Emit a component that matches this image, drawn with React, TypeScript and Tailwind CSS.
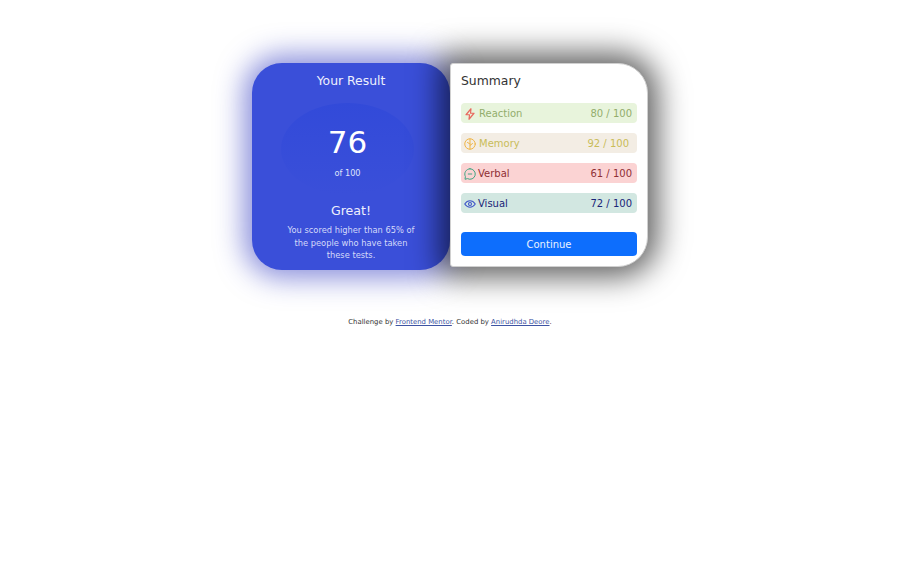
const rows = [
  { label: "Reaction", score: "80 / 100", bg: "bg-[#e8f4dc]", text: "text-[#93ad6c]", gap: "gap-[3px]", pr: "pr-[5px]", icon: "reaction" },
  { label: "Memory", score: "92 / 100", bg: "bg-[#f3ede4]", text: "text-[#c9bc59]", gap: "gap-[3px]", pr: "pr-[8px]", icon: "memory" },
  { label: "Verbal", score: "61 / 100", bg: "bg-[#fbd3d3]", text: "text-[#8f2f33]", gap: "gap-[2px]", pr: "pr-[5px]", icon: "verbal" },
  { label: "Visual", score: "72 / 100", bg: "bg-[#d2e7e1]", text: "text-[#1a2578]", gap: "gap-[2px]", pr: "pr-[5px]", icon: "visual" },
];

function RowIcon({ name }: { name: string }) {
  if (name === "reaction") {
    return (
      <svg className="translate-y-[1px]" width="12" height="12" viewBox="0 0 24 24" fill="none" stroke="#e8695f" strokeWidth="2.4" strokeLinejoin="round">
        <path d="M14 1.500 4 13.500h7l-1 9 10-12h-7z" />
      </svg>
    );
  }
  if (name === "memory") {
    return (
      <svg className="translate-y-[1px]" width="12" height="12" viewBox="0 0 24 24" fill="none" stroke="#efb547" strokeWidth="2" strokeLinecap="round">
        <circle cx="12" cy="12" r="10.500" />
        <path d="M12 2v20M12 12 7 9M12 15l5-4" />
      </svg>
    );
  }
  if (name === "verbal") {
    return (
      <svg className="translate-y-[1px]" width="12" height="12" viewBox="0 0 24 24" fill="none" stroke="#3fa583" strokeWidth="2" strokeLinecap="round">
        <path d="M12 1.500a10.500 10.500 0 1 1-5 19.700L2 22.500l.8-5.500A10.500 10.500 0 0 1 12 1.500z" />
        <path d="M8.500 12h7" />
      </svg>
    );
  }
  return (
    <svg className="translate-y-[1px]" width="12" height="12" viewBox="0 0 24 24" fill="none" stroke="#3f56c8" strokeWidth="2.2">
      <path d="M1.500 12C4.500 7.500 8 5.500 12 5.500s7.500 2 10.500 6.500c-3 4.500-6.500 6.500-10.500 6.500S4.500 16.500 1.500 12z" />
      <circle cx="12" cy="12" r="3" />
    </svg>
  );
}

export default function App() {
  return (
    <div className="min-h-[563px] bg-white pt-[63px] font-['DejaVu_Sans',sans-serif]">
      <main className="mx-auto flex h-[207px] w-[396px] items-start">
        <section className="relative z-0 flex h-[207px] w-[198px] flex-col items-center rounded-[30px] bg-[#3a4fd9] shadow-[0_0_28px_8px_rgba(40,50,190,0.55)]">
          <h1 className="mt-[9px] text-[12.400px] leading-[18px] text-[#eef0fd]">Your Result</h1>
          <div className="mt-[13px] mr-[7px] flex h-[92px] w-[133px] flex-col items-center rounded-[50%] bg-gradient-to-b from-[#324ad9] to-[#3a4fd9] pt-[19px]">
            <p className="text-[31px] leading-[40px] text-white">76</p>
            <p className="mt-[5px] text-[8.200px] leading-[12px] text-[#dfe3fb]">of 100</p>
          </div>
          <h2 className="mt-[7px] text-[12.600px] leading-[18px] text-[#eef0fd]">Great!</h2>
          <p className="mt-[4px] w-[130px] text-center text-[8.300px] leading-[12.500px] text-[#d5daf9]">
            You scored higher than 65% of the people who have taken these tests.
          </p>
        </section>
        <section className="relative z-10 flex h-[204px] w-[198px] flex-col rounded-l-[3px] rounded-r-[30px] border border-[#d0d0d0] bg-white px-[10px] shadow-[0_0_30px_10px_rgba(0,0,0,0.62)]">
          <h2 className="mt-[8px] text-[12.400px] leading-[18px] text-[#333333]">Summary</h2>
          <ul className="mt-[13px] flex flex-col gap-[10px]">
            {rows.map((row) => (
              <li key={row.label} className={`flex h-[20px] items-center justify-between rounded-[4px] pl-[3px] text-[10px] ${row.bg} ${row.text} ${row.pr}`}>
                <span className={`flex items-center ${row.gap}`}>
                  <RowIcon name={row.icon} />
                  {row.label}
                </span>
                <span>{row.score}</span>
              </li>
            ))}
          </ul>
          <button type="button" className="mt-[19px] h-[24px] rounded-[4px] bg-[#0d6efd] pt-[1px] text-[10px] text-[#eaf2ff]">
            Continue
          </button>
        </section>
      </main>
      <footer className="mt-[47px] text-center text-[6.900px] leading-[10px] text-[#333333]">
        Challenge by <a href="#" className="text-[#3e54a3] underline">Frontend Mentor</a>. Coded by <a href="#" className="text-[#3e54a3] underline">Anirudhda Deore</a>.
      </footer>
    </div>
  );
}
